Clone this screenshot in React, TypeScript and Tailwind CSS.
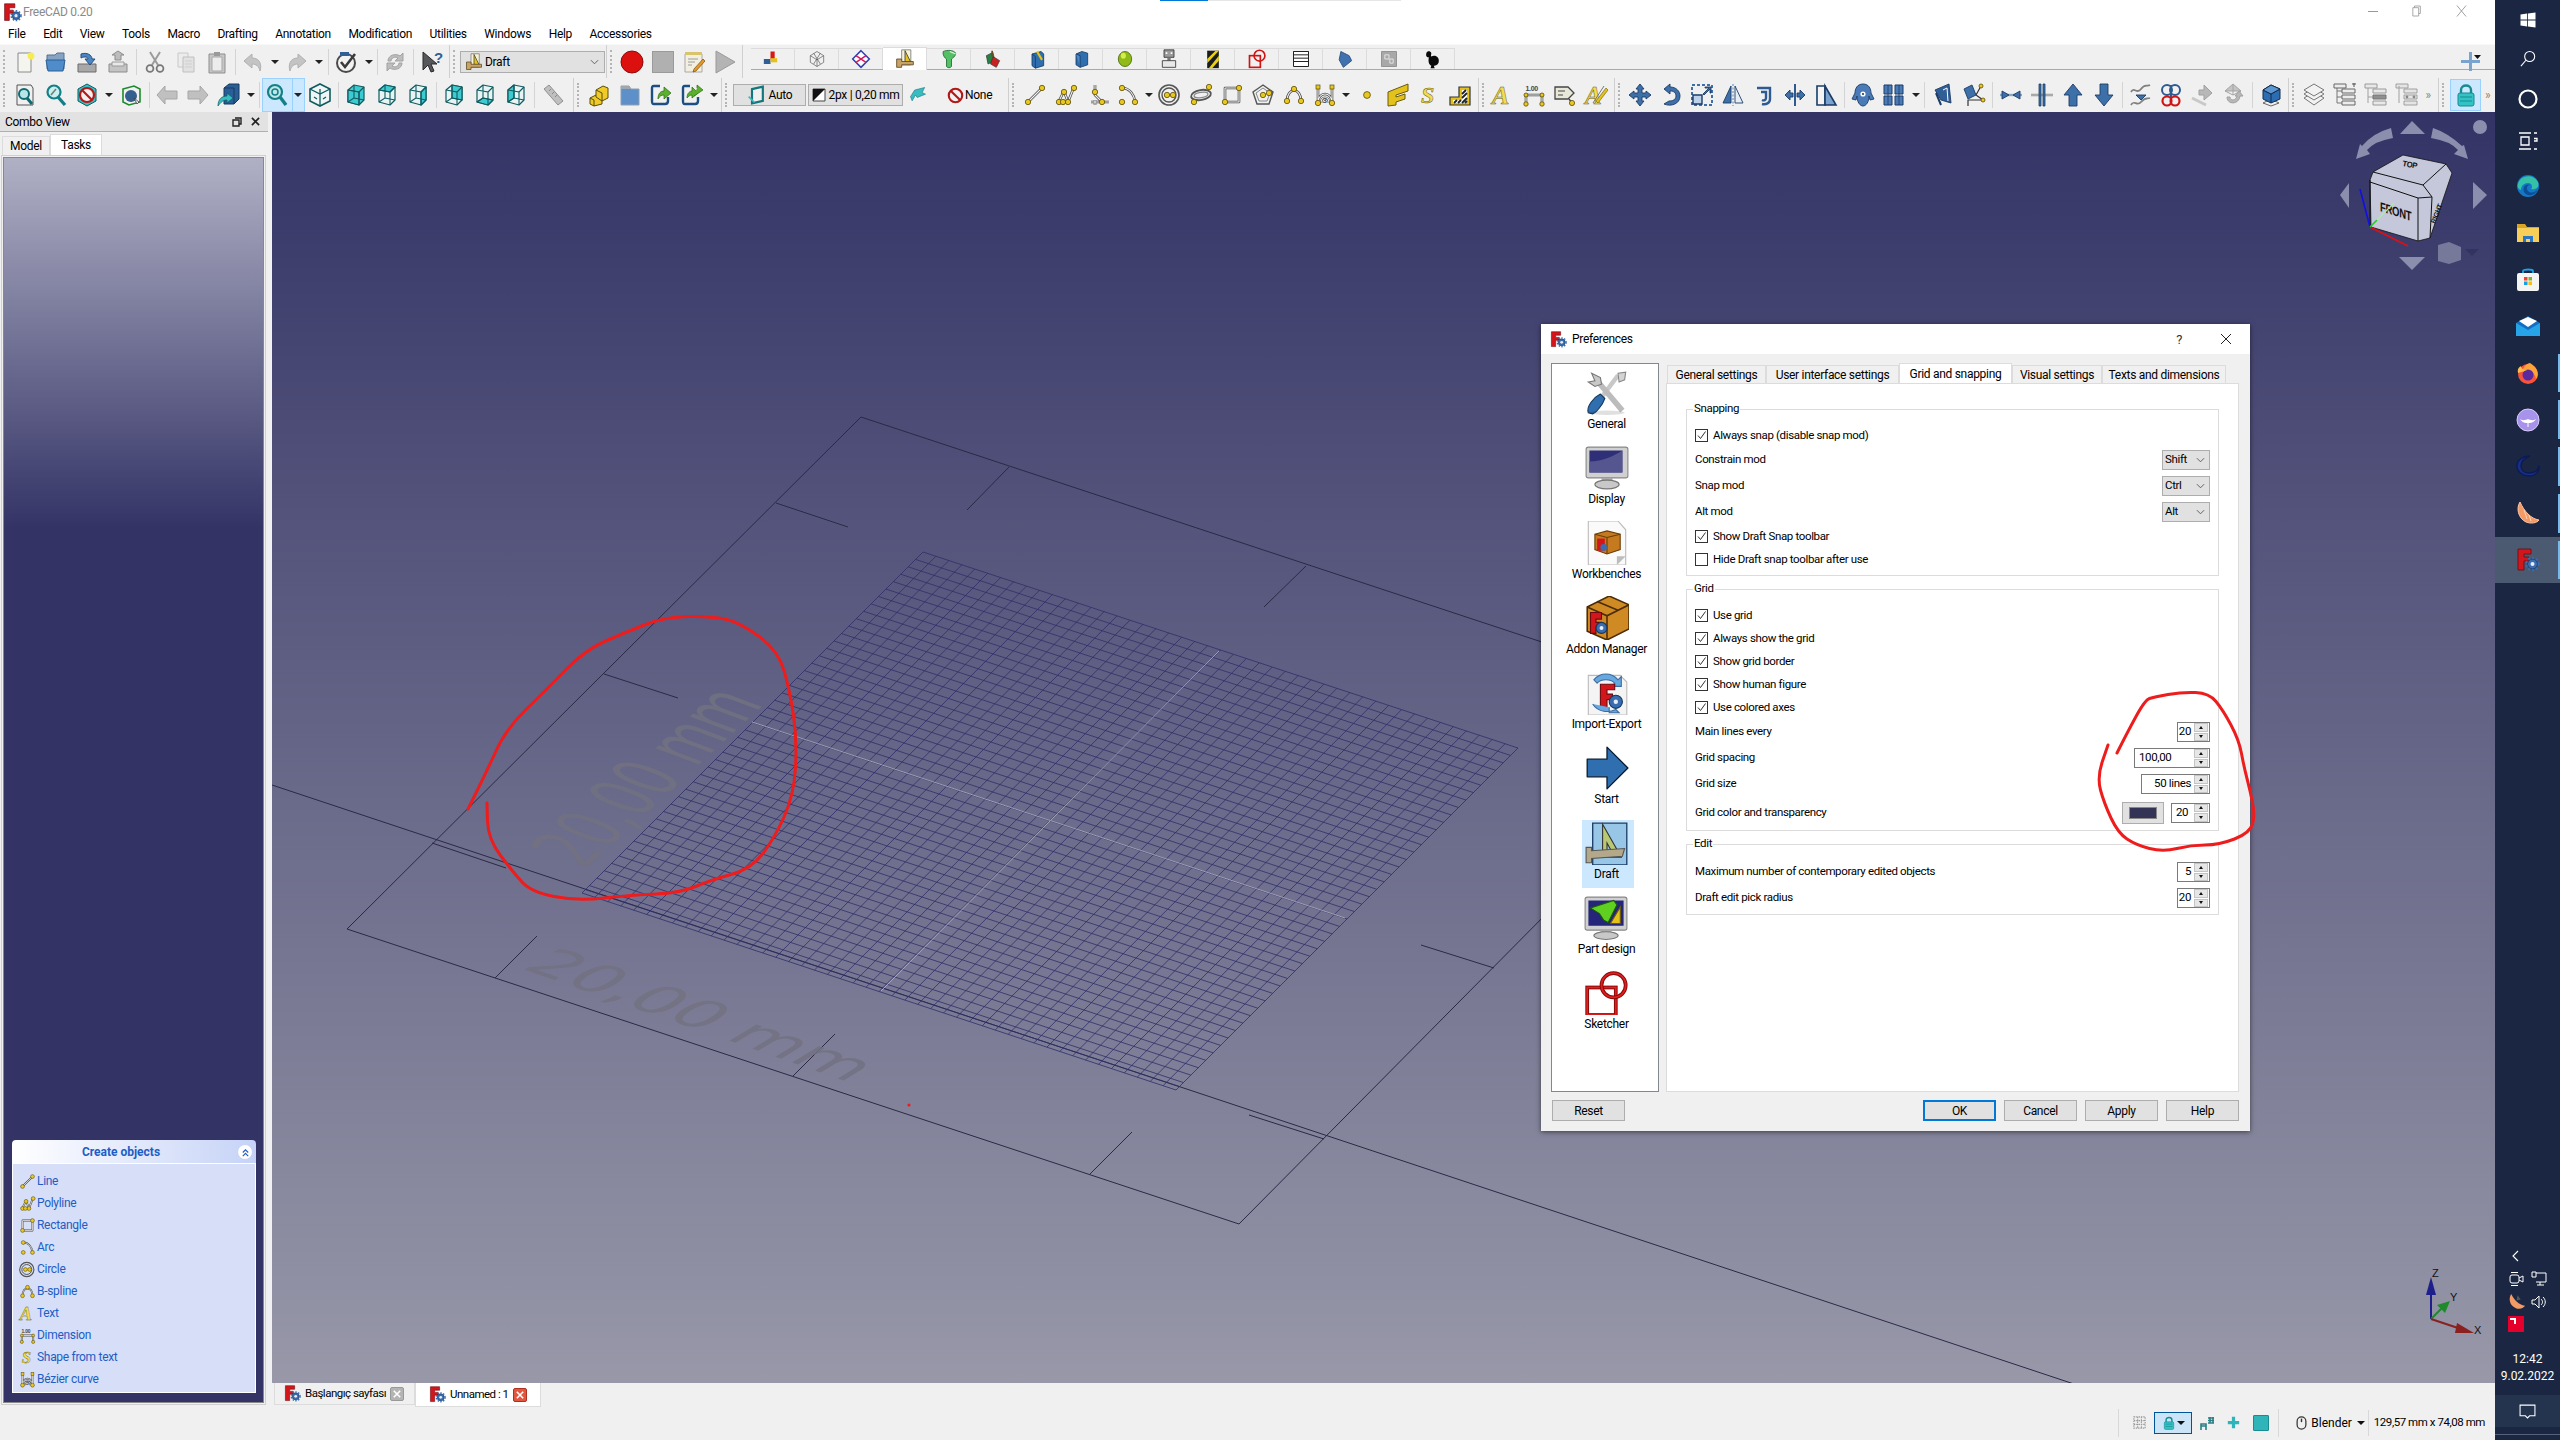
import React from "react"

// ---- small drawing helpers ----
const Svg = ({ children, className = "w-6 h-6" }: { children: React.ReactNode; className?: string }) => (
  <svg viewBox="0 0 24 24" className={`overflow-visible ${className}`}>
    {children}
  </svg>
)

const Dot = ({ x, y, r = 2.7 }: { x: number; y: number; r?: number }) => (
  <circle cx={x} cy={y} r={r} fill="#e8c820" stroke="#5c4d05" strokeWidth="0.8" />
)

const DL = ({ d }: { d: string }) => (
  <>
    <path d={d} fill="none" stroke="#4a4a4a" strokeWidth="2.6" strokeLinejoin="round" />
    <path d={d} fill="none" stroke="#f4f4f4" strokeWidth="1.1" strokeLinejoin="round" />
  </>
)

const Draft = ({ d, dots }: { d: string; dots: number[][] }) => (
  <>
    <DL d={d} />
    {dots.map((p, i) => (
      <Dot key={i} x={p[0]} y={p[1]} />
    ))}
  </>
)

const Blue = ({ d, fill = "#3d6fa8" }: { d: string; fill?: string }) => (
  <path d={d} fill={fill} stroke="#1b3c66" strokeWidth="0.9" strokeLinejoin="round" />
)

const Logo = () => (
  <>
    <path d="M2 1H15V6H8V9H13V13H8V22H2Z" fill="#d2161c" stroke="#6b0b10" strokeWidth="0.8" />
    <circle cx="16.5" cy="16" r="5" fill="#3a6cb0" stroke="#16365f" strokeWidth="0.8" />
    <circle cx="16.5" cy="16" r="6.2" fill="none" stroke="#3a6cb0" strokeWidth="2" strokeDasharray="2 2" />
    <circle cx="16.5" cy="16" r="2" fill="#e8eef7" />
  </>
)

// teal box used by the standard views, `f` is the highlighted face
const TealBox = ({ f }: { f: string }) => {
  const face: Record<string, string> = {
    front: "M4 7L15 9V22L4 19Z",
    top: "M4 7L10 2L20 4L15 9Z",
    right: "M15 9L20 4V17L15 22Z",
    rear: "M10 2L20 4V17L10 15Z",
    left: "M4 7L10 2V15L4 19Z",
    bottom: "M4 19L10 15L20 17L15 22Z",
  }
  return (
    <>
      <path d="M4 7L10 2L20 4V17L15 22L4 19Z" fill={f === "front" ? "#3ccbd0" : "#e8f4f4"} stroke="#0f5b60" strokeWidth="1.2" strokeLinejoin="round" />
      <path d={face[f]} fill="#3ccbd0" stroke="#0f5b60" strokeWidth="1.2" strokeLinejoin="round" />
      <path d="M4 7L15 9V22M15 9L20 4M10 2V15L4 19M10 15L20 17" fill="none" stroke="#0f5b60" strokeWidth="1.1" />
    </>
  )
}

const icons: Record<string, React.ReactNode> = {
  new: (
    <>
      <path d="M5 3H18V22H5Z" fill="#f5f5f0" stroke="#8a8a8a" />
      <circle cx="18" cy="6" r="3.4" fill="#f6ec50" />
    </>
  ),
  open: (
    <>
      <path d="M3 5H11L13 3H20V19H3Z" fill="#87a3c4" stroke="#55718f" />
      <path d="M2 10H21L19 21H4Z" fill="#4f8ccb" stroke="#2d5f95" />
    </>
  ),
  save: (
    <>
      <path d="M3 14H21V22H3Z" fill="#a8a8a8" stroke="#6c6c6c" />
      <path d="M6 4C12 2 17 5 17 9H20L15 15L10 9H13C13 7 10 6 6 8Z" fill="#4d85c2" stroke="#264f80" />
    </>
  ),
  saveas: (
    <>
      <path d="M3 14H21V22H3Z" fill="#c4c4c4" stroke="#8c8c8c" />
      <path d="M9 10H15V5H18L12 1L6 5H9Z" fill="#bdbdbd" stroke="#8c8c8c" />
      <path d="M6 12H18V16H6Z" fill="#e8e8e8" stroke="#9a9a9a" />
    </>
  ),
  cut: (
    <>
      <path d="M7 2L15 15M17 2L9 15" stroke="#9c9c9c" strokeWidth="2" />
      <circle cx="7" cy="18.5" r="3.4" fill="none" stroke="#787878" strokeWidth="1.8" />
      <circle cx="17" cy="18.5" r="3.4" fill="none" stroke="#787878" strokeWidth="1.8" />
    </>
  ),
  copy: (
    <>
      <path d="M4 3H14V17H4Z" fill="#ececec" stroke="#c8c8c8" />
      <path d="M9 7H20V22H9Z" fill="#e2e2e2" stroke="#c0c0c0" />
      <path d="M11 11H18M11 14H18M11 17H18" stroke="#cfcfcf" />
    </>
  ),
  paste: (
    <>
      <path d="M4 4H20V23H4Z" fill="#c6c6c6" stroke="#8f8f8f" />
      <path d="M7 7H17V21H7Z" fill="#ececec" stroke="#a8a8a8" />
      <path d="M9 2H15V6H9Z" fill="#9a9a9a" />
    </>
  ),
  undo: <path d="M11 4L3 11L11 18V14C15 14 18 16 19 21C21 15 19 8 11 8Z" fill="#c4c4c4" stroke="#b0b0b0" />,
  redo: <path d="M13 4L21 11L13 18V14C9 14 6 16 5 21C3 15 5 8 13 8Z" fill="#c4c4c4" stroke="#b0b0b0" />,
  check: (
    <>
      <circle cx="11" cy="13" r="9" fill="#f2f2f2" stroke="#4a4a4a" strokeWidth="2" />
      <path d="M5 2H14V6H5Z" fill="#2f5f96" />
      <path d="M6 12L10 17L20 4" fill="none" stroke="#3a3a3a" strokeWidth="2.6" />
    </>
  ),
  refresh: (
    <>
      <path d="M5 11C5 5 13 3 17 6L20 3V11H12L15 8C12 6 8 8 8 11Z" fill="#bdbdbd" stroke="#a2a2a2" />
      <path d="M19 13C19 19 11 21 7 18L4 21V13H12L9 16C12 18 16 16 16 13Z" fill="#bdbdbd" stroke="#a2a2a2" />
    </>
  ),
  whats: (
    <>
      <path d="M3 2L3 20L8 15L11 22L14 21L11 14H17Z" fill="#56575a" stroke="#2a2a2a" />
      <text x="14" y="13" fontFamily="Liberation Sans" fontWeight="700" fontSize="15" fill="#2f5f96">?</text>
    </>
  ),
  record: <circle cx="12" cy="12" r="11" fill="#dd1010" stroke="#8c0a0a" />,
  stop: <rect x="1.5" y="1.5" width="21" height="21" fill="#b0b0b0" stroke="#9a9a9a" />,
  edit: (
    <>
      <path d="M3 4H20V22H3Z" fill="#f3efe0" stroke="#a8a8a8" />
      <path d="M3 2H20V5H3Z" fill="#d8c46a" />
      <path d="M6 9H16M6 12H13M6 15H10" stroke="#9a9a9a" />
      <path d="M12 19L21 9L23 11L14 21L11 22Z" fill="#e39a2a" stroke="#7a4d10" strokeWidth="0.7" />
    </>
  ),
  play: <path d="M3 1L22 12L3 23Z" fill="#b4b4b4" stroke="#9a9a9a" />,
  fitall: (
    <>
      <path d="M4 2H18L20 5V22H4Z" fill="#f0f0f0" stroke="#555" />
      <circle cx="11" cy="11" r="5" fill="#b8e6e8" stroke="#0f6b70" strokeWidth="2" />
      <path d="M14 15L19 21" stroke="#0f6b70" strokeWidth="3" />
    </>
  ),
  fitsel: (
    <>
      <circle cx="10" cy="9" r="6.5" fill="#c8f0f0" stroke="#138087" strokeWidth="2.2" />
      <path d="M14 14L21 22" stroke="#138087" strokeWidth="3.4" />
      <path d="M7 12L12 6" stroke="#7a7a7a" strokeWidth="1.6" />
    </>
  ),
  nothing: (
    <>
      <path d="M12 1L21 6V18L12 23L3 18V6Z" fill="#35c0c6" stroke="#0f5b60" />
      <circle cx="12" cy="12" r="7" fill="#f0f0f0" stroke="#b81818" strokeWidth="2.2" />
      <path d="M7 7L17 17" stroke="#b81818" strokeWidth="2.2" />
    </>
  ),
  bbox: (
    <>
      <path d="M4 6L15 3L21 6V19L10 22L4 19Z" fill="none" stroke="#1e8a2a" strokeWidth="1.6" />
      <circle cx="12" cy="13" r="6" fill="#33608f" />
      <path d="M15 15L18 21L20 19Z" fill="#eee" stroke="#333" strokeWidth="0.7" />
    </>
  ),
  back: <path d="M10 3L2 12L10 21V16H22V8H10Z" fill="#c0c0c0" stroke="#a6a6a6" />,
  forward: <path d="M14 3L22 12L14 21V16H2V8H14Z" fill="#c0c0c0" stroke="#a6a6a6" />,
  sync: (
    <>
      <path d="M7 5L12 1H22V16L17 21H7Z" fill="#2a5e96" stroke="#173a60" />
      <path d="M7 5H17V21" fill="none" stroke="#173a60" />
      <path d="M1 23C1 16 5 13 10 13V10L16 15L10 20V17C6 17 4 19 1 23Z" fill="#37bcc2" stroke="#0f5b60" strokeWidth="0.7" />
    </>
  ),
  zoomsel: (
    <>
      <circle cx="10" cy="9" r="7" fill="#bfe6e8" stroke="#138087" strokeWidth="2.2" />
      <path d="M15 14L21 22" stroke="#138087" strokeWidth="3.4" />
      <circle cx="10" cy="9" r="3" fill="none" stroke="#138087" strokeWidth="1.5" />
    </>
  ),
  iso: (
    <>
      <path d="M12 1L22 6V18L12 23L2 18V6Z" fill="#eef6f6" stroke="#0f5b60" strokeWidth="1.6" />
      <path d="M2 6L12 11L22 6M12 11V23M12 6V11M6 14L9 16M15 16L18 14" fill="none" stroke="#0f5b60" strokeWidth="1.3" />
    </>
  ),
  vfront: <TealBox f="front" />,
  vtop: <TealBox f="top" />,
  vright: <TealBox f="right" />,
  vrear: <TealBox f="rear" />,
  vbottom: <TealBox f="bottom" />,
  vleft: <TealBox f="left" />,
  measure: (
    <>
      <path d="M3 6L8 2L22 18L17 22Z" fill="#bfbfbf" stroke="#909090" />
      <path d="M8 8L10 6M11 11L13 9M14 14L16 12" stroke="#8a8a8a" />
    </>
  ),
  part: (
    <>
      <path d="M3 15L11 11L15 13V21L7 23L3 21Z" fill="#eecb2a" stroke="#5c4d05" />
      <path d="M9 7L16 3L21 5V15L15 18L9 14Z" fill="#eecb2a" stroke="#5c4d05" />
      <path d="M3 15L7 17V23M9 7L15 10V18" fill="none" stroke="#5c4d05" />
    </>
  ),
  group: (
    <>
      <path d="M3 3H11L13 6H21V22H3Z" fill="#5d8fc8" stroke="#8ca0b6" />
      <path d="M3 3H11L13 6H3Z" fill="#9fa7b0" />
    </>
  ),
  link: (
    <>
      <path d="M11 3H5C3 3 3 4 3 6V18C3 20 3 21 5 21H16C18 21 19 20 19 18V14" fill="none" stroke="#1c4e82" strokeWidth="2.4" />
      <path d="M9 16C9 10 12 8 15 8V4L22 10L15 16V12C12 12 11 13 9 16Z" fill="#5cb030" stroke="#2a6b10" strokeWidth="0.7" />
    </>
  ),
  link2: (
    <>
      <path d="M10 3H5C3 3 3 4 3 6V18C3 20 3 21 5 21H15C17 21 18 20 18 18V14" fill="none" stroke="#1c4e82" strokeWidth="2.4" />
      <path d="M7 15C7 10 10 8 12 8V4L18 10L12 15V12C10 12 9 13 7 15Z" fill="#5cb030" stroke="#2a6b10" strokeWidth="0.7" />
      <path d="M14 13L23 7L17 2V5" fill="#5cb030" stroke="#2a6b10" strokeWidth="0.7" />
    </>
  ),
  // draft drawing tools
  line: <Draft d="M5 19L19 5" dots={[[5, 19], [19, 5]]} />,
  polyline: <Draft d="M4 20L10 8L14 19L20 4" dots={[[5, 19], [10, 9], [14, 19], [9, 19], [20, 5]]} />,
  fillet: (
    <>
      <DL d="M10 2V12L17 19H24M10 22V17M6 19H14" />
      <Dot x={10} y={9} />
      <Dot x={17} y={19} />
    </>
  ),
  arc: <Draft d="M6 5C14 5 18 12 19 18" dots={[[6, 5], [6, 19], [19, 19]]} />,
  circle: (
    <>
      <circle cx="11" cy="12" r="10" fill="none" stroke="#555" strokeWidth="1.6" />
      <circle cx="11" cy="12" r="7" fill="none" stroke="#555" strokeWidth="1.4" />
      <Dot x={9} y={12} />
      <Dot x={15} y={12} />
    </>
  ),
  ellipse: (
    <>
      <ellipse cx="12" cy="12" rx="10" ry="5" transform="rotate(-10 12 12)" fill="none" stroke="#555" strokeWidth="1.8" />
      <ellipse cx="12" cy="12" rx="7" ry="2.6" transform="rotate(-10 12 12)" fill="none" stroke="#888" strokeWidth="1.2" />
      <Dot x={5} y={19} />
      <Dot x={20} y={4} />
    </>
  ),
  rect: <Draft d="M5 5H19V19H5Z" dots={[[19, 5], [5, 19]]} />,
  polygon: (
    <>
      <path d="M12 2L22 9L18 21H6L2 9Z" fill="none" stroke="#555" strokeWidth="1.4" />
      <path d="M12 5L19 10L16 18H8L5 10Z" fill="none" stroke="#888" />
      <Dot x={12} y={12} />
      <Dot x={18} y={10} />
    </>
  ),
  bspline: <Draft d="M5 18C5 4 19 4 19 18" dots={[[5, 18], [12, 6], [19, 18]]} />,
  bezier: (
    <>
      <DL d="M5 20V4M19 20V4M5 20C5 8 19 8 19 20M8 20C8 13 16 13 16 20" />
      <rect x="3" y="2" width="4" height="4" fill="#e8c820" stroke="#5c4d05" strokeWidth="0.7" />
      <rect x="17" y="2" width="4" height="4" fill="#e8c820" stroke="#5c4d05" strokeWidth="0.7" />
      <Dot x={5} y={20} />
      <Dot x={19} y={20} />
      <text x="9.5" y="20" fontFamily="Liberation Sans" fontWeight="700" fontSize="8" fill="#555">3</text>
    </>
  ),
  point: <Dot x={12} y={12} r={3.4} />,
  facebinder: <path d="M2 9L22 1V8L10 12V14L19 11V16L10 19V22L2 23Z" fill="#e3c21c" stroke="#6b5a08" strokeLinejoin="round" />,
  shapestring: (
    <text x="4" y="20" fontFamily="Liberation Serif" fontStyle="italic" fontWeight="700" fontSize="24" fill="#f2dc50" stroke="#6b5a08" strokeWidth="0.5">S</text>
  ),
  hatch: (
    <>
      <path d="M2 14H11V4H22V22H2Z" fill="#e3c21c" stroke="#333" strokeWidth="1.2" />
      <path d="M5 17H19V20H5Z" fill="#fff" />
      <path d="M14 7H19V20H14Z" fill="#fff" />
      <path d="M14 11L18 7M14 15L19 10M6 20L9 17M10 20L13 17M14 20L19 15M17 20L19 18" stroke="#222" strokeWidth="1.8" />
    </>
  ),
  // annotation
  atext: (
    <text x="1" y="21" fontFamily="Liberation Serif" fontStyle="italic" fontWeight="700" fontSize="26" fill="#f2dc50" stroke="#6b5a08" strokeWidth="0.5">A</text>
  ),
  dimension: (
    <>
      <text x="3.5" y="8" fontFamily="Liberation Sans" fontWeight="700" fontSize="7" fill="#444">1.00</text>
      <DL d="M4 12H20M4 12V21M20 12V21" />
      <Dot x={4} y={12} r={2} />
      <Dot x={20} y={12} r={2} />
      <Dot x={4} y={21} r={2.2} />
      <Dot x={20} y={21} r={2.2} />
    </>
  ),
  label: (
    <>
      <path d="M2 4H15L21 10L15 16H2Z" fill="#e8e8d8" stroke="#444" strokeWidth="1.3" />
      <path d="M5 8H12M5 12H10" stroke="#444" />
      <path d="M16 16L19 20" stroke="#444" strokeWidth="1.4" />
      <Dot x={19} y={20} r={2.6} />
    </>
  ),
  annostyle: (
    <>
      <text x="1" y="21" fontFamily="Liberation Serif" fontStyle="italic" fontWeight="700" fontSize="25" fill="#f2dc50" stroke="#6b5a08" strokeWidth="0.5">A</text>
      <path d="M12 18L22 5L24 7L14 20Z" fill="#e3c21c" stroke="#6b5a08" strokeWidth="0.6" />
      <path d="M9 20L20 3" stroke="#777" strokeWidth="1" />
    </>
  ),
  // draft modification tools
  move: <Blue d="M12 1L16 6H14V10H18V8L23 12L18 16V14H14V18H16L12 23L8 18H10V14H6V16L1 12L6 8V10H10V6H8Z" />,
  rotate: <Blue d="M11 1L5 6L11 11V8C15 8 17 10 17 13C17 17 13 18 10 18L5 21C12 24 21 21 21 13C21 8 17 4 11 4Z" />,
  scale: (
    <>
      <path d="M2 2H22V22H2Z" fill="none" stroke="#3d6fa8" strokeWidth="2" strokeDasharray="3 2" />
      <path d="M3 12H12V21H3Z" fill="#bcd2ea" stroke="#1b3c66" strokeWidth="1.4" />
      <Blue d="M13 11L19 5H15V4H21V10H20V6L14 12Z" />
    </>
  ),
  mirror: (
    <>
      <Blue d="M10 3V20H2Z" />
      <path d="M14 3V20H22Z" fill="#e8eef6" stroke="#1b3c66" strokeWidth="0.9" />
      <path d="M12 1V23" stroke="#7aa3cf" strokeWidth="1.4" strokeDasharray="2 1.5" />
    </>
  ),
  offset: <path d="M5 5H18V16C18 20 14 22 10 21M9 9H14V15C14 17 12 18 10 17" fill="none" stroke="#2d5b91" strokeWidth="2.4" />,
  trim: (
    <>
      <Blue d="M7 7L2 12L7 17V14H10V10H7Z" />
      <Blue d="M17 7L22 12L17 17V14H14V10H17Z" />
      <path d="M12 1V23" stroke="#2d5b91" strokeWidth="2" />
    </>
  ),
  stretch: (
    <>
      <path d="M3 3H11V22H3Z" fill="#f4f4f4" stroke="#1b3c66" strokeWidth="1.6" />
      <path d="M11 3L22 22H11Z" fill="#7ba3d0" stroke="#1b3c66" strokeWidth="1.6" />
    </>
  ),
  clone: (
    <>
      <path d="M12 1C18 1 20 6 20 10L23 16L19 17L18 13C18 19 15 23 12 23C9 23 6 19 6 13L5 17L1 16L4 10C4 6 6 1 12 1Z" fill="#4a7bb8" stroke="#1b3c66" strokeWidth="0.9" />
      <circle cx="12" cy="11" r="2.6" fill="#fff" />
      <circle cx="12" cy="11" r="1.1" fill="#1b3c66" />
    </>
  ),
  array: (
    <>
      <path d="M2 2H10V11H2ZM13 2H21V11H13ZM2 13H10V22H2ZM13 13H21V22H13Z" fill="#4a7bb8" stroke="#1b3c66" />
      <path d="M6 2V22M17 2V22" stroke="#1b3c66" strokeWidth="0.8" />
    </>
  ),
  draft2d: (
    <>
      <Blue d="M4 7L18 1L20 20L10 17Z" fill="#2f5f96" />
      <path d="M12 7L16 5L17 18" fill="none" stroke="#fff" />
      <path d="M5 10L10 22" stroke="#1b3c66" strokeWidth="2" />
    </>
  ),
  nodes: (
    <>
      <Blue d="M2 6L10 2L14 12L6 16Z" />
      <path d="M14 12L19 3M14 12L21 17H6V23" fill="none" stroke="#333" strokeWidth="1.2" />
      <Dot x={19} y={3} r={2} />
      <Dot x={21} y={17} r={2} />
    </>
  ),
  joinpt: (
    <>
      <path d="M1 12H23" stroke="#8ba6c4" strokeWidth="2.4" />
      <Blue d="M3 8L10 12L3 16ZM21 8L14 12L21 16Z" />
    </>
  ),
  split: (
    <>
      <path d="M1 12H23" stroke="#a9a9a9" strokeWidth="2.6" />
      <path d="M9 1H11V23H9ZM13 1H15V23H13Z" fill="#3d6fa8" stroke="#1b3c66" strokeWidth="0.8" />
    </>
  ),
  up: <Blue d="M12 1L21 12H16V23H8V12H3Z" />,
  down: <Blue d="M12 23L21 12H16V1H8V12H3Z" />,
  wire: (
    <>
      <path d="M3 9C6 3 9 12 13 6S19 4 22 2M3 22C6 16 9 24 13 19S19 16 22 15" fill="none" stroke="#808080" strokeWidth="1.8" />
      <Blue d="M8 12H18L13 17Z" />
    </>
  ),
  draft2sketch: (
    <>
      <circle cx="8" cy="7" r="5" fill="none" stroke="#2d5b91" strokeWidth="2" />
      <circle cx="16" cy="7" r="5" fill="none" stroke="#2d5b91" strokeWidth="2" />
      <path d="M12 2V16" stroke="#2d5b91" strokeWidth="2" />
      <circle cx="8" cy="18" r="4.5" fill="none" stroke="#d01414" strokeWidth="2.2" />
      <circle cx="16" cy="18" r="4.5" fill="none" stroke="#d01414" strokeWidth="2.2" />
    </>
  ),
  shape2d: (
    <>
      <path d="M9 7H14V2L22 10L14 17V12H9Z" fill="#b8b8b8" stroke="#a0a0a0" />
      <path d="M2 15L16 22" stroke="#c8c8c8" strokeWidth="3" />
    </>
  ),
  shape3d: (
    <>
      <path d="M12 1L20 8H4Z" fill="#c4c4c4" stroke="#a4a4a4" />
      <path d="M12 1V12M4 8L12 12L20 8" fill="none" stroke="#a4a4a4" />
      <path d="M6 14C6 22 18 22 19 13H22L18 8L14 13H16C15 18 9 18 9 14Z" fill="#b8b8b8" stroke="#a0a0a0" />
    </>
  ),
  layercube: (
    <>
      <path d="M4 20L12 16L20 20L12 23Z" fill="none" stroke="#666" />
      <path d="M4 7L12 2L21 6V16L12 20L4 16Z" fill="#2c6cb0" stroke="#102c4e" />
      <path d="M4 7L12 11L21 6M12 11V20" fill="none" stroke="#102c4e" />
      <path d="M12 2L21 6L12 11L4 7Z" fill="#5c95d0" stroke="#102c4e" />
    </>
  ),
  layers: (
    <>
      <path d="M2 15L12 9L22 15L12 22Z" fill="#f2f2f2" stroke="#777" />
      <path d="M2 11L12 5L22 11L12 17Z" fill="#f2f2f2" stroke="#777" />
      <path d="M2 7L12 1L22 7L12 13Z" fill="#f2f2f2" stroke="#777" />
    </>
  ),
  tree1: (
    <>
      <path d="M4 3V20M4 8H9M4 14H9M4 20H9" stroke="#777" fill="none" />
      <path d="M1 1H13V5H1ZM9 6H22V10H9ZM9 12H22V16H9ZM9 18H22V22H9Z" fill="#ececec" stroke="#666" />
      <path d="M19 1H23M21 0V4" stroke="#555" />
    </>
  ),
  tree2: (
    <>
      <path d="M4 3V20M4 14H9" stroke="#a0a0a0" fill="none" />
      <path d="M1 1H13V5H1ZM9 6H22V10H9ZM9 18H22V22H9Z" fill="#e8e8e8" stroke="#9a9a9a" />
      <path d="M9 12H22V16H9Z" fill="#8f8f8f" stroke="#777" />
    </>
  ),
  tree3: (
    <>
      <path d="M1 1H13V5H1ZM9 6H22V10H9ZM9 12H22V16H9ZM9 18H22V22H9Z" fill="#e4e4e4" stroke="#a0a0a0" />
      <path d="M4 3V20" stroke="#a0a0a0" />
      <circle cx="12" cy="14" r="1.4" fill="#888" />
      <circle cx="19" cy="14" r="1.4" fill="#888" />
    </>
  ),
  lock: (
    <>
      <path d="M7 11V7C7 1 17 1 17 7V11" fill="none" stroke="#148c90" strokeWidth="2.4" />
      <rect x="4" y="10" width="16" height="13" rx="2" fill="#33c2c6" stroke="#148c90" />
      <path d="M6 14H18M6 18H18" stroke="#148c90" />
    </>
  ),
  // workbench tabs
  wbA2: (
    <>
      <path d="M9 3H14V12H9Z" fill="#d61818" />
      <path d="M1 12H9V18H1Z" fill="#2f5f96" />
      <path d="M9 11H17V16H9Z" fill="#e3c21c" />
    </>
  ),
  wbMesh: <path d="M12 3L20 8V16L12 21L4 16V8ZM4 8L12 13L20 8M12 13V21M8 5L16 18M16 5L8 18" fill="#f0f0f0" stroke="#555" strokeWidth="0.8" />,
  wbFem: (
    <>
      <path d="M12 2L22 12L12 22L2 12Z" fill="#fff" stroke="#2f3fb0" strokeWidth="1.8" />
      <path d="M6 8L18 16M18 8L6 16" stroke="#d61860" strokeWidth="1.8" />
    </>
  ),
  wbDraft: (
    <>
      <path d="M8 1H19V19H8Z" fill="#f6f2d8" stroke="#777" />
      <path d="M12 2L19 16H12Z" fill="#e3c21c" stroke="#3a3a3a" />
      <path d="M2 12H8V15H22V19H8V22H2Z" fill="#c7a465" stroke="#5c4520" />
    </>
  ),
  wbPart: (
    <>
      <path d="M5 3C9 1 18 1 20 5C20 9 16 11 15 12V21C13 23 11 23 9 21V12C7 11 4 7 5 3Z" fill="#54c066" stroke="#206a30" />
      <path d="M13 3L20 6" stroke="#e0f6e0" strokeWidth="1.5" />
    </>
  ),
  wbPath: (
    <>
      <path d="M4 8L12 4L14 14L6 18Z" fill="#268044" stroke="#333" strokeWidth="0.8" />
      <path d="M12 9L20 14L16 22L9 18Z" fill="#c92020" stroke="#333" strokeWidth="0.8" />
      <path d="M11 2V9" stroke="#6a4a20" strokeWidth="2" />
    </>
  ),
  wbPd: (
    <>
      <path d="M6 6L17 3L20 6V20L10 23L6 20Z" fill="#2f6fb0" stroke="#173a60" />
      <path d="M12 3L18 13" stroke="#e3c21c" strokeWidth="2.6" />
      <path d="M6 6L10 9V23" fill="none" stroke="#173a60" />
    </>
  ),
  wbBlue: (
    <>
      <path d="M6 6L13 3L20 5V19L11 22L6 19Z" fill="#2f6fb0" stroke="#173a60" />
      <path d="M6 6L11 8V22" fill="#4f88c4" stroke="#173a60" />
    </>
  ),
  wbBall: (
    <>
      <ellipse cx="12" cy="12" rx="8" ry="9" fill="#8ebb18" stroke="#4a6a08" />
      <ellipse cx="10" cy="8" rx="3" ry="3.6" fill="#d6ee4c" />
    </>
  ),
  wbRobot: (
    <>
      <path d="M6 1H18V10H6Z" fill="#9a9a9a" stroke="#333" />
      <path d="M8 4H10V6H8ZM14 4H16V6H14Z" fill="#fff" />
      <path d="M10 10H14V14H10Z" fill="#777" />
      <path d="M4 14H20V22H4Z" fill="#e8e8e8" stroke="#333" />
    </>
  ),
  wbTech: (
    <>
      <path d="M5 2H19V23H5Z" fill="#1c1c1c" />
      <path d="M5 12L15 2H19L5 17ZM19 8V14L11 23H7Z" fill="#e8d018" />
    </>
  ),
  wbSketch: (
    <>
      <rect x="3" y="8" width="13" height="14" fill="none" stroke="#d01414" strokeWidth="2" />
      <circle cx="15" cy="8" r="6.5" fill="none" stroke="#d01414" strokeWidth="2" />
    </>
  ),
  wbSheet: <path d="M3 3H21V21H3ZM3 7H21M3 11H21M3 15H21M3 3H21" fill="#fff" stroke="#222" strokeWidth="1.2" />,
  wbSurface: <path d="M7 3L17 8L20 14L10 22L5 13Z" fill="#3f72ae" stroke="#244a78" />,
  wbTd: (
    <>
      <path d="M3 3H21V21H3Z" fill="#a8a8a8" stroke="#888" />
      <path d="M7 7H12V12H7ZM13 12H17V17H13Z" fill="none" stroke="#eee" />
    </>
  ),
  wbDodo: (
    <>
      <path d="M4 5C5 2 9 2 10 5C10 7 9 8 10 9C14 7 19 9 19 14C19 19 15 20 13 20L14 23H9L10 20C7 19 6 15 7 10C5 10 3 9 4 5Z" fill="#0a0a0a" />
    </>
  ),
}

const Icon = ({ k, className }: { k: string; className?: string }) => <Svg className={className}>{icons[k]}</Svg>

// ---- toolbars ----
const Tool = ({ k, arrow = "" }: { k: string; arrow?: string }) => (
  <>
    <div className="w-[31px] h-full flex shrink-0 items-center justify-center">
      <Icon k={k} />
    </div>
    {arrow && <Arrow className={arrow} />}
  </>
)

const Arrow = ({ className }: { className: string }) => (
  <div className={`h-full flex shrink-0 items-center justify-center ${className}`}>
    <div className="w-0 h-0 border-x-[4px] border-x-transparent border-t-[4px] border-t-[#222]" />
  </div>
)

const Sep = ({ className }: { className: string }) => (
  <div className={`h-full flex shrink-0 items-center justify-center ${className}`}>
    <div className="w-px h-[26px] bg-[#d4d4d4]" />
  </div>
)

const Toolbar = ({ className, grip, children }: { className: string; grip: string; children: React.ReactNode }) => (
  <div className={`h-full flex shrink-0 items-center border-r border-[#cfcfcf] ${className}`}>
    <div className={`h-full shrink-0 pl-[3px] py-[5px] ${grip}`}>
      <div className="h-full w-0 border-l-[2px] border-dotted border-[#b4b4b4]" />
    </div>
    {children}
  </div>
)

const tabIcons = ["wbA2", "wbMesh", "wbFem", "wbDraft", "wbPart", "wbPath", "wbPd", "wbBlue", "wbBall", "wbRobot", "wbTech", "wbSketch", "wbSheet", "wbSurface", "wbTd", "wbDodo"]

const TopRow = () => (
  <div className="h-[34px] flex bg-[#f0f0f0] border-t border-[#f8f8f8]">
    <Toolbar className="w-[450px]" grip="w-[9.5px]">
      <Tool k="new" />
      <Tool k="open" />
      <Tool k="save" />
      <Tool k="saveas" />
      <Sep className="w-[6px]" />
      <Tool k="cut" />
      <Tool k="copy" />
      <Tool k="paste" />
      <Sep className="w-[5px]" />
      <Tool k="undo" arrow="w-[13px]" />
      <Tool k="redo" arrow="w-[13px]" />
      <Sep className="w-[6px]" />
      <Tool k="check" arrow="w-[13px]" />
      <Sep className="w-[4px]" />
      <Tool k="refresh" />
      <Sep className="w-[6px]" />
      <Tool k="whats" />
    </Toolbar>
    <Toolbar className="w-[157px]" grip="w-[10px]">
      <div className="w-[145px] h-[22px] flex items-center bg-[#e1e1e1] border border-[#adadad] pl-[4px]">
        <Icon k="wbDraft" className="w-[18px] h-[18px]" />
        <span className="ml-[2px] flex-1">Draft</span>
        <svg viewBox="0 0 10 6" className="w-[9px] h-[6px] mr-[5px]">
          <path d="M1 1L5 5L9 1" fill="none" stroke="#555" />
        </svg>
      </div>
    </Toolbar>
    <Toolbar className="w-[136px]" grip="w-[9.5px]">
      <Tool k="record" />
      <Tool k="stop" />
      <Tool k="edit" />
      <Tool k="play" />
    </Toolbar>
    <div className="flex-1 relative pl-[8px] pt-[3px]">
      <div className="h-[22px] flex border-b border-[#a9a9a9]">
        {tabIcons.map((t) => (
          <div
            key={t}
            className={`w-[44px] shrink-0 flex items-center justify-center border-r border-t border-[#dcdcdc] ${
              t === "wbDraft" ? "bg-white h-[23px] -mt-[1px]" : ""
            }`}
          >
            <Icon k={t} className="w-[20px] h-[20px]" />
          </div>
        ))}
      </div>
      <svg viewBox="0 0 24 24" className="absolute right-[12px] top-[5px] w-[24px] h-[24px]">
        <path d="M10 2H13V10H21V13H13V21H10V13H2V10H10Z" fill="#7aa3cf" />
        <path d="M15 5H22L18.5 9Z" fill="#111" />
      </svg>
    </div>
  </div>
)

const BottomRow = () => (
  <div className="h-[34px] flex bg-[#f0f0f0]">
    <Toolbar className="w-[574px]" grip="w-[9.5px]">
      <Tool k="fitall" />
      <Tool k="fitsel" />
      <Tool k="nothing" arrow="w-[13px]" />
      <Tool k="bbox" />
      <Sep className="w-[5px]" />
      <Tool k="back" />
      <Tool k="forward" />
      <Tool k="sync" arrow="w-[13px]" />
      <Sep className="w-[4px]" />
      <div className="w-[43px] h-full shrink-0 flex items-center bg-[#cce8ff] border border-[#99d1ff]">
        <div className="w-[30px] flex justify-center">
          <Icon k="zoomsel" />
        </div>
        <div className="w-[12px] h-full flex items-center justify-center border-l border-[#99d1ff]">
          <div className="w-0 h-0 border-x-[4px] border-x-transparent border-t-[4px] border-t-[#222]" />
        </div>
      </div>
      <Tool k="iso" />
      <Sep className="w-[5px]" />
      <Tool k="vfront" />
      <Tool k="vtop" />
      <Tool k="vright" />
      <Sep className="w-[5px]" />
      <Tool k="vrear" />
      <Tool k="vbottom" />
      <Tool k="vleft" />
      <Sep className="w-[6px]" />
      <Tool k="measure" />
    </Toolbar>
    <Toolbar className="w-[148px]" grip="w-[9.5px]">
      <Tool k="part" />
      <Tool k="group" />
      <Tool k="link" />
      <Tool k="link2" arrow="w-[13px]" />
    </Toolbar>
    <Toolbar className="w-[287px]" grip="w-[11px]">
      <div className="w-[73px] h-[22px] flex items-center justify-center gap-[2px] bg-[#e1e1e1] border border-[#adadad]">
        <svg viewBox="0 0 24 24" className="w-[20px] h-[20px]">
          <path d="M6 5L19 2V19L6 22Z" fill="#f0f0f0" stroke="#12777c" strokeWidth="2.6" />
          <path d="M2 14L9 21" stroke="#37bcc2" strokeWidth="2" />
        </svg>
        <span>Auto</span>
      </div>
      <div className="w-[95px] h-[22px] ml-[2px] flex items-center justify-center gap-[3px] bg-[#e1e1e1] border border-[#adadad]">
        <svg viewBox="0 0 14 14" className="w-[14px] h-[14px]">
          <path d="M1 1H13V13H1Z" fill="#fff" stroke="#444" />
          <path d="M1 1H13L1 13Z" fill="#111" />
        </svg>
        <span>2px | 0,20 mm</span>
      </div>
      <div className="w-[30px] h-full flex items-center justify-center">
        <svg viewBox="0 0 24 24" className="w-[20px] h-[20px]">
          <path d="M3 14L8 6L20 3L17 9L21 11L11 15L9 12L5 19Z" fill="#37bcc2" stroke="#14767b" strokeWidth="0.7" />
        </svg>
      </div>
      <div className="ml-[14px] flex items-center gap-[1px]">
        <svg viewBox="0 0 24 24" className="w-[17px] h-[17px]">
          <circle cx="12" cy="12" r="9.5" fill="none" stroke="#b01818" strokeWidth="3" />
          <path d="M5.5 5.5L18.5 18.5" stroke="#b01818" strokeWidth="3" />
        </svg>
        <span>None</span>
      </div>
    </Toolbar>
    <Toolbar className="w-[470px]" grip="w-[10.5px]">
      <Tool k="line" />
      <Tool k="polyline" />
      <Tool k="fillet" />
      <Tool k="arc" arrow="w-[11px]" />
      <Tool k="circle" />
      <Tool k="ellipse" />
      <Tool k="rect" />
      <Tool k="polygon" />
      <Tool k="bspline" />
      <Tool k="bezier" arrow="w-[11px]" />
      <Tool k="point" />
      <Tool k="facebinder" />
      <Tool k="shapestring" />
      <Tool k="hatch" />
    </Toolbar>
    <Toolbar className="w-[136px]" grip="w-[8.5px]">
      <Tool k="atext" />
      <Tool k="dimension" />
      <Tool k="label" />
      <Tool k="annostyle" />
    </Toolbar>
    <Toolbar className="w-[674px]" grip="w-[9.5px]">
      <Tool k="move" />
      <Tool k="rotate" />
      <Tool k="scale" />
      <Tool k="mirror" />
      <Tool k="offset" />
      <Tool k="trim" />
      <Tool k="stretch" />
      <Sep className="w-[6px]" />
      <Tool k="clone" />
      <Tool k="array" arrow="w-[12px]" />
      <Sep className="w-[6px]" />
      <Tool k="draft2d" />
      <Tool k="nodes" />
      <Sep className="w-[6px]" />
      <Tool k="joinpt" />
      <Tool k="split" />
      <Tool k="up" />
      <Tool k="down" />
      <Sep className="w-[5px]" />
      <Tool k="wire" />
      <Tool k="draft2sketch" />
      <Tool k="shape2d" />
      <Tool k="shape3d" />
      <Sep className="w-[7px]" />
      <Tool k="layercube" />
    </Toolbar>
    <Toolbar className="w-[150px]" grip="w-[9.5px]">
      <Tool k="layers" />
      <Tool k="tree1" />
      <Tool k="tree2" />
      <Tool k="tree3" />
      <span className="ml-[3px] text-[#888]">»</span>
    </Toolbar>
    <div className="flex-1 flex items-center relative">
      <div className="h-full shrink-0 w-[11px] pl-[3px] py-[5px]">
        <div className="h-full w-0 border-l-[2px] border-dotted border-[#b4b4b4]" />
      </div>
      <div className="w-[31px] h-[32px] flex items-center justify-center bg-[#cce8ff] border border-[#99d1ff]">
        <Icon k="lock" />
      </div>
      <span className="ml-[4px] text-[#888]">»</span>
    </div>
  </div>
)

// ---- left dock ----
const taskItems = [
  ["Line", "line"],
  ["Polyline", "polyline"],
  ["Rectangle", "rect"],
  ["Arc", "arc"],
  ["Circle", "circle"],
  ["B-spline", "bspline"],
  ["Text", "atext"],
  ["Dimension", "dimension"],
  ["Shape from text", "shapestring"],
  ["Bézier curve", "bezier"],
]

const ComboView = () => (
  <div className="w-[272px] shrink-0 flex flex-col bg-[#f0f0f0]">
    <div className="w-[268px] h-[20px] flex items-center justify-between bg-[#e2e2e2] border-b border-[#b0b0b0] pl-[5px] pr-[8px]">
      <span>Combo View</span>
      <div className="flex items-center gap-[9px]">
        <svg viewBox="0 0 10 10" className="w-[10px] h-[10px]">
          <path d="M3 1H9V7H7M1 3H7V9H1Z" fill="none" stroke="#222" strokeWidth="1.4" />
        </svg>
        <svg viewBox="0 0 10 10" className="w-[9px] h-[9px]">
          <path d="M1 1L9 9M9 1L1 9" stroke="#222" strokeWidth="1.8" />
        </svg>
      </div>
    </div>
    <div className="h-[23px] flex items-end pl-[2px]">
      <div className="w-[48px] h-[19px] flex items-center justify-center bg-[#f0f0f0] border border-[#dcdcdc] border-b-0">Model</div>
      <div className="w-[52px] h-[21px] flex items-center justify-center bg-white border border-[#dcdcdc] border-b-0">Tasks</div>
    </div>
    <div className="w-[265px] flex-1 ml-px flex flex-col border border-[#d0d0d0] p-px">
      <div className="flex-1 border border-[#888] bg-[linear-gradient(180deg,#b0b0c5_0px,#333366_370px)] flex flex-col justify-end pb-[9px] pl-[8px]">
        <div className="w-[244px] h-[253px] flex flex-col">
          <div className="h-[24px] relative flex items-center justify-center pr-[26px] rounded-t-[4px] bg-[linear-gradient(90deg,#ffffff,#c6d3f7)] border-b border-white">
            <span className="font-bold text-[#215dc6] tracking-normal">Create objects</span>
            <div className="absolute right-[3px] top-[4px] w-[16px] h-[16px] rounded-full bg-white border border-[#c6d3f7] flex items-center justify-center">
              <svg viewBox="0 0 10 10" className="w-[9px] h-[9px]">
                <path d="M2 5L5 2L8 5M2 9L5 6L8 9" fill="none" stroke="#215dc6" strokeWidth="1.3" />
              </svg>
            </div>
          </div>
          <div className="flex-1 flex flex-col bg-[#d6dff7] border border-white border-t-0 pt-[6px] pl-[6px]">
            {taskItems.map(([label, k]) => (
              <div key={label} className="h-[22px] flex items-center gap-[1px] text-[#215dc6]">
                <Icon k={k} className="w-[17px] h-[17px]" />
                <span>{label}</span>
              </div>
            ))}
          </div>
        </div>
      </div>
    </div>
  </div>
)

// ---- 3D view ----
const smooth = (pts: number[][]) => {
  let d = `M${pts[0][0]} ${pts[0][1]}`
  for (let i = 1; i < pts.length - 1; i++) {
    const mx = (pts[i][0] + pts[i + 1][0]) / 2
    const my = (pts[i][1] + pts[i + 1][1]) / 2
    d += `Q${pts[i][0]} ${pts[i][1]} ${mx} ${my}`
  }
  const last = pts[pts.length - 1]
  return `${d}L${last[0]} ${last[1]}`
}

const leftLoop = [
  [468, 809], [486, 773], [506, 729], [545, 691], [585, 650], [624, 633], [664, 617], [711, 616], [739, 622],
  [778, 650], [790, 691], [797, 740], [794, 795], [774, 839], [751, 869], [711, 880], [680, 893], [632, 895],
  [577, 901], [531, 892], [513, 872], [488, 839], [487, 803],
]
const rightLoop = [
  [2117, 753], [2127, 733], [2145, 700], [2154, 697], [2182, 692], [2209, 693], [2223, 710], [2239, 740], [2244, 767],
  [2250, 790], [2255, 815], [2250, 833], [2219, 845], [2191, 845], [2163, 852], [2136, 845], [2118, 833], [2104, 803],
  [2097, 777], [2108, 745],
]

const segments = [
  [861, 417, 1560, 648],
  [861, 417, 347, 929],
  [347, 929, 1239, 1224],
  [1239, 1224, 1560, 900],
  [272, 785, 2077, 1385],
  [1009, 467, 967, 510],
  [1306, 566, 1264, 607],
  [776, 503, 848, 527],
  [604, 674, 678, 698],
  [432, 843, 506, 868],
  [537, 936, 495, 978],
  [835, 1034, 793, 1076],
  [1132, 1132, 1089, 1175],
  [1249, 1115, 1324, 1139],
  [1421, 945, 1494, 968],
]

const lerp = (a: number[], b: number[], t: number) => [a[0] + (b[0] - a[0]) * t, a[1] + (b[1] - a[1]) * t]
const gridTL = [923, 552]
const gridTR = [1518, 748]
const gridBR = [1176, 1090]
const gridBL = [582, 893]

const Grid = () => {
  const lines: string[] = []
  for (let i = 0; i <= 46; i++) {
    const t = i / 46
    const a = lerp(gridTL, gridTR, t)
    const b = lerp(gridBL, gridBR, t)
    const c = lerp(gridTL, gridBL, t)
    const d = lerp(gridTR, gridBR, t)
    lines.push(`M${a[0]} ${a[1]}L${b[0]} ${b[1]}M${c[0]} ${c[1]}L${d[0]} ${d[1]}`)
  }
  // one more row bunches up towards the near edge
  const c = lerp(gridTL, gridBL, 0.99)
  const d = lerp(gridTR, gridBR, 0.99)
  lines.push(`M${c[0]} ${c[1]}L${d[0]} ${d[1]}`)
  return <path d={lines.join("")} fill="none" stroke="#2f2f68" strokeWidth="0.8" />
}

const NavCube = () => (
  <g transform="translate(2340 115)">
    <g fill="#8b8eac">
      <path d="M72 6L60 19H85Z" />
      <circle cx="140" cy="12" r="7" />
      <path d="M51 13L53 23Q35 26 27 35L30 39L16 44L20 29L22 31Q33 18 51 13Z" />
      <path d="M93 13L91 23Q110 26 118 35L114 39L128 44L124 30L122 31Q108 18 93 13Z" />
      <path d="M9 68L0 80L9 93Z" />
      <path d="M133 67L147 80L133 94Z" />
      <path d="M59 142H85L72 155Z" />
    </g>
    <path d="M63 40L106 49L112 58L90 123L78 126L31 112L30 65L33 57Z" fill="#c4c8da" stroke="#111" strokeWidth="0.8" strokeLinejoin="round" />
    <path d="M33 57L83 70L106 49M30 67L78 83L92 82L83 70M78 83V126M92 82L90 123M30 65V112" fill="none" stroke="#111" strokeWidth="1" />
    <text transform="matrix(.95 .18 -.2 1 62 51)" fontFamily="Liberation Sans" fontWeight="700" fontSize="8" fill="#111">TOP</text>
    <text transform="matrix(.95 .3 0 1.3 40 96)" fontFamily="Liberation Sans" fontWeight="700" fontSize="10" fill="#111">FRONT</text>
    <text transform="rotate(-68 95 109)" x="95" y="109" fontFamily="Liberation Sans" fontWeight="700" fontSize="7" fill="#111">RIGHT</text>
    <path d="M30 112L20 74" stroke="#1010e0" strokeWidth="1.6" />
    <path d="M30 112L68 131" stroke="#e01010" strokeWidth="1.6" />
    <path d="M30 112L37 105" stroke="#20d020" strokeWidth="1.6" />
    <path d="M37 105L54 88" stroke="#b0e8b0" strokeWidth="1.2" />
    <path d="M98 130L109 127L121 132V145L109 149L98 146Z" fill="#77799b" />
    <path d="M125 134H139L132 141Z" fill="#33335f" />
  </g>
)

const Scene = () => (
  <svg viewBox="272 112 2223 1271" className="absolute inset-0 w-full h-full">
    {segments.map((s, i) => (
      <line key={i} x1={s[0]} y1={s[1]} x2={s[2]} y2={s[3]} stroke="#2a2a46" strokeWidth="1" />
    ))}
    <text transform="matrix(.74 -.68 1.65 .62 584 870)" fontFamily="DejaVu Sans" fontSize="48" fill="#727282" opacity="0.85">20,00 mm</text>
    <text transform="matrix(.95 .33 -.72 .44 520 968)" fontFamily="DejaVu Sans" fontSize="68" fill="#727282" opacity="0.85">20,00 mm</text>
    <Grid />
    <path d="M752 722L1345 918M1219 651L881 991" stroke="#c4c4d0" strokeWidth="1" opacity="0.7" />
    <circle cx="909" cy="1105" r="1.6" fill="#ee1c1c" />
    <path d={smooth(leftLoop)} fill="none" stroke="#ee1c1c" strokeWidth="3" strokeLinecap="round" />
    <NavCube />
    {/* axis cross */}
    <path d="M2431 1319V1290" stroke="#1f1f8c" strokeWidth="2" />
    <path d="M2431 1277L2426 1295H2436Z" fill="#1f1f8c" />
    <path d="M2431 1319L2443 1307" stroke="#1f8a2c" strokeWidth="2" />
    <path d="M2450 1301L2437 1305L2445 1313Z" fill="#1f8a2c" />
    <path d="M2431 1319L2458 1328" stroke="#8a2020" strokeWidth="2" />
    <path d="M2474 1333L2457 1323L2455 1333Z" fill="#8a2020" />
    <g fontFamily="Liberation Sans" fontSize="11" fill="#111">
      <text x="2432" y="1277">Z</text>
      <text x="2450" y="1301">Y</text>
      <text x="2474" y="1334">X</text>
    </g>
  </svg>
)

// ---- preferences dialog ----
const Check = ({ label, on = true }: { label: string; on?: boolean }) => (
  <div className="h-[23px] flex items-center gap-[5px]">
    <div className="w-[13px] h-[13px] flex items-center justify-center bg-white border border-[#333]">
      {on && (
        <svg viewBox="0 0 11 11" className="w-[11px] h-[11px]">
          <path d="M2 5.5L4.5 8.5L9.5 1.5" fill="none" stroke="#333" strokeWidth="1" />
        </svg>
      )}
    </div>
    <span>{label}</span>
  </div>
)

const Combo = ({ value }: { value: string }) => (
  <div className="w-[48px] h-[20px] flex items-center justify-between bg-[#e1e1e1] border border-[#adadad] pl-[2px] pr-[4px]">
    <span>{value}</span>
    <svg viewBox="0 0 10 6" className="w-[9px] h-[6px]">
      <path d="M1 1L5 5L9 1" fill="none" stroke="#555" />
    </svg>
  </div>
)

const Spin = ({ value, className, left = false }: { value: string; className: string; left?: boolean }) => (
  <div className={`h-[20px] flex items-center bg-white border border-[#7a7a7a] ${className}`}>
    <span className={`flex-1 ${left ? "pl-[4px]" : "text-right pr-[3px]"}`}>{value}</span>
    <div className="w-[14px] h-[18px] flex flex-col gap-px mr-[1px]">
      <div className="flex-1 flex items-center justify-center bg-[#e6e6e6] border border-[#c4c4c4]">
        <div className="w-0 h-0 border-x-[2.5px] border-x-transparent border-b-[3px] border-b-[#111]" />
      </div>
      <div className="flex-1 flex items-center justify-center bg-[#e6e6e6] border border-[#c4c4c4]">
        <div className="w-0 h-0 border-x-[2.5px] border-x-transparent border-t-[3px] border-t-[#111]" />
      </div>
    </div>
  </div>
)

const Row = ({ label, className = "h-[26px]", children }: { label: string; className?: string; children: React.ReactNode }) => (
  <div className={`flex items-center justify-between ${className}`}>
    <span>{label}</span>
    <div className="flex items-center gap-[7px]">{children}</div>
  </div>
)

const Group = ({ title, className, children }: { title: string; className: string; children: React.ReactNode }) => (
  <div className={`relative border border-[#dcdcdc] pl-[8px] pr-[8px] text-[11.5px] tracking-[-0.35px] ${className}`}>
    <span className="absolute left-[6px] -top-[7px] bg-white px-[1px]">{title}</span>
    {children}
  </div>
)

const PrefIcons: Record<string, React.ReactNode> = {
  General: (
    <>
      <path d="M6 36L30 4" stroke="#c8c8c8" strokeWidth="4" />
      <path d="M3 38C1 32 8 24 14 21L18 25C16 31 10 38 7 39Z" fill="#2f6fb0" stroke="#173a60" />
      <path d="M34 36L12 10" stroke="#bcbcbc" strokeWidth="5" />
      <path d="M6 2L14 6L15 12L9 14L3 10L9 9Z" fill="#c8c8c8" stroke="#777" />
      <path d="M30 2L37 1L36 8L31 10Z" fill="#d4d4d4" stroke="#888" />
      <ellipse cx="20" cy="38" rx="16" ry="2" fill="#0000001f" />
    </>
  ),
  Display: (
    <>
      <rect x="1" y="1" width="38" height="28" rx="2" fill="#d0d0d0" stroke="#888" />
      <path d="M4 4H34V24H4Z" fill="#2f2f78" />
      <path d="M4 24V14C16 14 28 8 34 4V24Z" fill="#55558f" />
      <path d="M15 29H25V33H15Z" fill="#aaa" />
      <ellipse cx="20" cy="35" rx="11" ry="4" fill="#c8c8c8" stroke="#777" />
    </>
  ),
  Workbenches: (
    <>
      <path d="M3 0H30L37 8V40H3Z" fill="#fafafa" stroke="#bbb" />
      <path d="M29 40L37 32H29Z" fill="#bdbdbd" />
      <path d="M9 12L20 9L32 12V26L20 30L9 26Z" fill="#c67a20" stroke="#6a3e08" />
      <path d="M9 12L20 15L32 12M20 15V30" fill="none" stroke="#6a3e08" />
      <path d="M11 16H18V27H11Z" fill="#d2161c" />
      <circle cx="17" cy="24" r="3" fill="#3a6cb0" />
    </>
  ),
  "Addon Manager": (
    <>
      <path d="M2 10L22 0L40 8V30L20 40L2 32Z" fill="#d08a24" stroke="#4a2c06" strokeWidth="1.4" />
      <path d="M2 10L20 18L40 8M20 18V40" fill="none" stroke="#4a2c06" strokeWidth="1.4" />
      <path d="M11 5L30 13" stroke="#4a2c06" strokeWidth="1.4" />
      <path d="M5 15H15V21H10V24H14V28H10V34H5Z" fill="#d2161c" stroke="#6b0b10" />
      <circle cx="15" cy="29" r="5" fill="#3a6cb0" stroke="#16365f" />
      <circle cx="15" cy="29" r="1.8" fill="#e8eef7" />
    </>
  ),
  "Import-Export": (
    <>
      <path d="M3 4H32L38 10V40H3Z" fill="#f4f4f4" stroke="#bbb" />
      <path d="M8 8C14 1 24 1 30 8L33 5V14H24L27 11C23 7 15 7 11 11Z" fill="#68a8e0" stroke="#3a6ca0" />
      <path d="M14 12H27V17H20V21H25V26H20V34H14Z" fill="#d2161c" stroke="#6b0b10" />
      <circle cx="28" cy="28" r="6" fill="#3a6cb0" stroke="#16365f" />
      <circle cx="28" cy="28" r="2" fill="#e8eef7" />
      <path d="M7 30C12 38 22 38 28 35L31 38H22V33" fill="#68a8e0" stroke="#3a6ca0" />
    </>
  ),
  Start: <path d="M2 12H20V1L39 20L20 39V28H2Z" fill="#2f6fb0" stroke="#0a1c30" strokeWidth="1.2" strokeLinejoin="round" />,
  Draft: (
    <>
      <path d="M7 2H38V40H7Z" fill="#97c6e6" stroke="#1b3c66" strokeWidth="1.2" />
      <path d="M16 3L33 33H16Z" fill="#b8c874" stroke="#333" />
      <path d="M20 20L25 29H20Z" fill="#97c6e6" stroke="#333" />
      <path d="M1 24H6V27L36 25L34 32L6 34V38H1Z" fill="#b4a88a" stroke="#555" />
    </>
  ),
  "Part design": (
    <>
      <rect x="1" y="1" width="38" height="30" rx="2" fill="#d0d0d0" stroke="#888" />
      <path d="M4 4H36V27H4Z" fill="#25257a" />
      <path d="M6 11L27 4L30 8L22 24L18 22L14 16Z" fill="#5fd020" stroke="#1e5a08" />
      <path d="M33 10V25H24Z" fill="#e3c21c" stroke="#6b5a08" />
      <path d="M15 31H25V34H15Z" fill="#aaa" />
      <ellipse cx="20" cy="36" rx="11" ry="3.5" fill="#c8c8c8" stroke="#777" />
    </>
  ),
  Sketcher: (
    <>
      <rect x="2" y="15" width="26" height="25" fill="none" stroke="#8a0808" strokeWidth="3.4" />
      <rect x="2" y="15" width="26" height="25" fill="none" stroke="#e02020" strokeWidth="1.6" />
      <circle cx="26" cy="13" r="11" fill="none" stroke="#8a0808" strokeWidth="3.4" />
      <circle cx="26" cy="13" r="11" fill="none" stroke="#e02020" strokeWidth="1.6" />
    </>
  ),
}

const prefPages = ["General", "Display", "Workbenches", "Addon Manager", "Import-Export", "Start", "Draft", "Part design", "Sketcher"]

const prefTabs = [
  ["General settings", "w-[99px]"],
  ["User interface settings", "w-[133px]"],
  ["Grid and snapping", "w-[113px]"],
  ["Visual settings", "w-[90px]"],
  ["Texts and dimensions", "w-[124px]"],
]

const DlgButton = ({ label, className = "border-[#adadad]" }: { label: string; className?: string }) => (
  <div className={`w-[73px] h-[21px] flex items-center justify-center bg-[#e1e1e1] border ${className}`}>{label}</div>
)

const Preferences = () => (
  <div className="absolute left-[1269px] top-[212px] w-[709px] h-[807px] flex flex-col bg-[#f0f0f0] shadow-[0_1px_5px_rgba(0,0,0,0.55)]">
    <div className="h-[30px] flex items-center bg-white pl-[9px] pr-[18px]">
      <Svg className="w-[17px] h-[17px]">
        <Logo />
      </Svg>
      <span className="ml-[5px] flex-1">Preferences</span>
      <span className="text-[#333] text-[13px]">?</span>
      <svg viewBox="0 0 12 12" className="ml-[38px] w-[12px] h-[12px]">
        <path d="M1 1L11 11M11 1L1 11" stroke="#222" />
      </svg>
    </div>
    <div className="h-[729px] mt-[9px] flex pl-[10px] pr-[11px] gap-[7px]">
      <div className="w-[108px] shrink-0 flex flex-col items-center bg-white border border-[#828790] pt-[4px] pl-[3px]">
        {prefPages.map((p) => (
          <div key={p} className="relative h-[75px] flex flex-col items-center">
            {p === "Draft" && <div className="absolute left-[-3px] top-[2px] h-[68px] w-[52px] bg-[#cce8ff]" />}
            <svg viewBox="0 0 40 40" className="relative w-[44px] h-[44px] mt-[3px] shrink-0">
              {PrefIcons[p]}
            </svg>
            <span className="relative mt-[3px]">{p}</span>
          </div>
        ))}
      </div>
      <div className="flex-1 flex flex-col">
        <div className="h-[20px] flex items-end pl-[1px]">
          {prefTabs.map(([t, w]) => (
            <div
              key={t}
              className={`${w} flex items-center justify-center border border-[#dcdcdc] border-b-0 ${
                t === "Grid and snapping" ? "h-[20px] bg-white" : "h-[18px] bg-[#f0f0f0]"
              }`}
            >
              {t}
            </div>
          ))}
        </div>
        <div className="flex-1 bg-white border border-[#dcdcdc] pt-[25px] px-[19px] flex flex-col gap-[13px]">
          <Group title="Snapping" className="h-[167px] pt-[14px]">
            <Check label="Always snap (disable snap mod)" />
            <Row label="Constrain mod">
              <Combo value="Shift" />
            </Row>
            <Row label="Snap mod">
              <Combo value="Ctrl" />
            </Row>
            <Row label="Alt mod">
              <Combo value="Alt" />
            </Row>
            <Check label="Show Draft Snap toolbar" />
            <Check label="Hide Draft snap toolbar after use" on={false} />
          </Group>
          <Group title="Grid" className="h-[242px] pt-[14px]">
            <Check label="Use grid" />
            <Check label="Always show the grid" />
            <Check label="Show grid border" />
            <Check label="Show human figure" />
            <Check label="Use colored axes" />
            <Row label="Main lines every">
              <Spin value="20" className="w-[33px]" />
            </Row>
            <Row label="Grid spacing">
              <Spin value="100,00" className="w-[76px]" left />
            </Row>
            <Row label="Grid size">
              <Spin value="50 lines" className="w-[69px]" />
            </Row>
            <Row label="Grid color and transparency" className="h-[31px]">
              <div className="w-[42px] h-[22px] flex items-center justify-center bg-[#e1e1e1] border border-[#adadad]">
                <div className="w-[28px] h-[12px] bg-[#333355] border border-[#888]" />
              </div>
              <Spin value="20" className="w-[39px]" left />
            </Row>
          </Group>
          <Group title="Edit" className="h-[71px] pt-[14px]">
            <Row label="Maximum number of contemporary edited objects">
              <Spin value="5" className="w-[33px]" />
            </Row>
            <Row label="Draft edit pick radius">
              <Spin value="20" className="w-[33px]" />
            </Row>
          </Group>
        </div>
      </div>
    </div>
    <div className="mt-[8px] flex items-center pl-[11px] pr-[11px] gap-[8px]">
      <DlgButton label="Reset" />
      <div className="flex-1" />
      <DlgButton label="OK" className="border-2 border-[#0078d7]" />
      <DlgButton label="Cancel" />
      <DlgButton label="Apply" />
      <DlgButton label="Help" />
    </div>
  </div>
)

// ---- status bar ----
const StatusBar = () => (
  <div className="h-[35px] flex items-center justify-end bg-[#f0f0f0] pr-[10px]">
    <div className="w-px h-[28px] bg-[#d8d8d8]" />
    <svg viewBox="0 0 16 16" className="ml-[13px] w-[15px] h-[15px]">
      <path d="M2 2H14V14H2ZM2 6H14M2 10H14M6 2V14M10 2V14" fill="none" stroke="#999" strokeWidth="1.2" strokeDasharray="1.5 1" />
    </svg>
    <div className="ml-[7px] w-[38px] h-[22px] flex items-center justify-center gap-[1px] bg-[#cce4f7] border border-[#005499]">
      <Icon k="lock" className="w-[14px] h-[16px]" />
      <div className="w-0 h-0 border-x-[4px] border-x-transparent border-t-[4px] border-t-[#111]" />
    </div>
    <svg viewBox="0 0 16 16" className="ml-[7px] w-[16px] h-[16px]">
      <path d="M2 15V9H7V15M2 11H7M9 8H15M11 2V8M14 2V8M9 3H15M9 5.5H15" fill="none" stroke="#2a7f84" strokeWidth="1.6" />
    </svg>
    <svg viewBox="0 0 16 16" className="ml-[12px] w-[13px] h-[13px]">
      <path d="M6 1H10V6H15V10H10V15H6V10H1V6H6Z" fill="#2fb4ba" />
    </svg>
    <div className="ml-[13px] w-[16px] h-[16px] bg-[#2fb4ba] border border-[#1a8c91] rounded-[1px]" />
    <div className="ml-[9px] w-px h-[28px] bg-[#d8d8d8]" />
    <svg viewBox="0 0 12 16" className="ml-[17px] w-[11px] h-[14px]">
      <rect x="1" y="1" width="10" height="14" rx="5" fill="none" stroke="#333" strokeWidth="1.4" />
      <path d="M6 3V7" stroke="#333" strokeWidth="1.6" />
    </svg>
    <span className="ml-[4px] tracking-normal">Blender</span>
    <div className="ml-[5px] w-0 h-0 border-x-[4px] border-x-transparent border-t-[4px] border-t-[#111]" />
    <div className="ml-[3px] w-px h-[26px] bg-[#d8d8d8]" />
    <span className="ml-[5px] text-[11.5px] tracking-[-0.45px]">129,57 mm x 74,08 mm</span>
  </div>
)

const DocTabs = () => (
  <div className="h-[22px] flex items-start bg-[#f0f0f0] pl-[2px] text-[11.5px] tracking-[-0.5px]">
    <div className="w-[141px] h-[22px] flex items-center bg-[#f0f0f0] border border-[#dcdcdc] border-t-0 pl-[9px] gap-[4px]">
      <Svg className="w-[17px] h-[17px]">
        <Logo />
      </Svg>
      <span>Başlangıç sayfası</span>
      <div className="w-[14px] h-[14px] flex items-center justify-center bg-[#b4b4b4] border border-[#999] rounded-[2px]">
        <svg viewBox="0 0 10 10" className="w-[8px] h-[8px]">
          <path d="M1 1L9 9M9 1L1 9" stroke="#fff" strokeWidth="2" />
        </svg>
      </div>
    </div>
    <div className="w-[126px] h-[24px] z-10 flex items-center bg-white border border-[#dcdcdc] border-t-0 pl-[13px] gap-[4px]">
      <Svg className="w-[17px] h-[17px]">
        <Logo />
      </Svg>
      <span>Unnamed : 1</span>
      <div className="w-[14px] h-[14px] flex items-center justify-center bg-[#e2563f] border border-[#b03020] rounded-[2px]">
        <svg viewBox="0 0 10 10" className="w-[8px] h-[8px]">
          <path d="M1 1L9 9M9 1L1 9" stroke="#fff" strokeWidth="2" />
        </svg>
      </div>
    </div>
  </div>
)

// ---- windows taskbar on the right ----
const Running = () => <div className="absolute right-0 top-[4px] bottom-[4px] w-[2px] bg-[#76b9ed]" />

const apps: { key: string; h: string; run?: boolean; active?: boolean; node: React.ReactNode }[] = [
  { key: "win", h: "h-[39px]", node: <path d="M3 5.5L11 4.3V11.4H3ZM12 4.1L21 3V11.4H12ZM3 12.6H11V19.7L3 18.5ZM12 12.6H21V21L12 19.9Z" fill="#fff" /> },
  {
    key: "search",
    h: "h-[40px]",
    node: (
      <>
        <circle cx="14" cy="9" r="6" fill="none" stroke="#fff" strokeWidth="1.3" />
        <path d="M9.5 13.5L3.5 20.5" stroke="#fff" strokeWidth="1.3" />
      </>
    ),
  },
  { key: "cortana", h: "h-[40px]", node: <circle cx="12" cy="12" r="8.5" fill="none" stroke="#fff" strokeWidth="2.2" /> },
  {
    key: "tasks",
    h: "h-[44px]",
    node: (
      <path d="M3 4H15M3 20H15M5 8H13V16H5ZM18 4H21M18 12H21V9.5H18M18 20H21" fill="none" stroke="#fff" strokeWidth="1.3" />
    ),
  },
  {
    key: "edge",
    h: "h-[46.7px]",
    node: (
      <>
        <circle cx="12" cy="12" r="11" fill="#1477c8" />
        <path d="M2 10C4 1 17 -1 22 8C24 14 19 16 15 15C17 13 16 9 12 9C8 9 5 12 5 16C2 15 1 13 2 10Z" fill="#35c1a5" />
        <path d="M8 18C6 12 11 9 14 11C11 11 10 14 12 17C15 20 20 18 22 15C20 21 12 24 8 18Z" fill="#0c4f94" />
      </>
    ),
  },
  {
    key: "folder",
    h: "h-[46.7px]",
    node: (
      <>
        <path d="M1 3H9L11 6H23V21H1Z" fill="#d9a526" />
        <path d="M1 7H23V21H1Z" fill="#f7cf58" />
        <path d="M7 15H17V21H14V18H10V21H7Z" fill="#2a76c4" />
      </>
    ),
  },
  {
    key: "store",
    h: "h-[46.7px]",
    node: (
      <>
        <path d="M7 6V3C7 1 17 1 17 3V6" fill="none" stroke="#1da1e8" strokeWidth="1.8" />
        <rect x="1" y="5" width="22" height="18" rx="2" fill="#f4f4f4" />
        <path d="M8 9H11.5V12.5H8Z" fill="#e6492d" />
        <path d="M12.5 9H16V12.5H12.5Z" fill="#7cb51f" />
        <path d="M8 13.5H11.5V17H8Z" fill="#13a2e8" />
        <path d="M12.5 13.5H16V17H12.5Z" fill="#fdbb0a" />
      </>
    ),
  },
  {
    key: "mail",
    h: "h-[46.7px]",
    node: (
      <>
        <path d="M0 9L12 2L24 9V22H0Z" fill="#1170c4" />
        <path d="M0 9L12 16L24 9V22H0Z" fill="#27a3e8" />
        <path d="M3 7L12 13L21 7L12 3Z" fill="#fff" />
      </>
    ),
  },
  {
    key: "firefox",
    h: "h-[46.7px]",
    run: true,
    node: (
      <>
        <circle cx="12" cy="13" r="10" fill="#f9533a" />
        <path d="M14 2C21 6 24 13 20 18C18 8 10 8 8 11C5 9 9 3 14 2Z" fill="#ffa436" />
        <circle cx="12" cy="14" r="5.5" fill="#5b2a9e" />
        <path d="M2 12C1 7 4 6 5 5C5 8 9 10 12 9" fill="#ffbd4f" />
      </>
    ),
  },
  {
    key: "tor",
    h: "h-[46.7px]",
    run: true,
    node: (
      <>
        <circle cx="12" cy="12" r="11" fill="#a893ec" stroke="#d8ccf6" />
        <path d="M4 11C7 13 10 12 12 11C14 12 17 13 20 11C18 15 14 15 12.5 15V19H11.5V15C10 15 6 15 4 11Z" fill="#fff" />
      </>
    ),
  },
  {
    key: "crescent",
    h: "h-[46.7px]",
    run: true,
    node: <path d="M14 2C7 2 1 6 1 12C1 18 7 22 13 22C20 22 24 17 23 12C22 17 18 19 13 19C8 19 5 16 5 12C5 7 9 4 14 2Z" fill="#182f8a" stroke="#0c1a55" strokeWidth="1.4" />,
  },
  {
    key: "orange",
    h: "h-[46.7px]",
    run: true,
    node: (
      <>
        <path d="M4 1C0 7 2 17 10 21C15 23 21 22 23 19C15 18 8 10 4 1Z" fill="#f59a64" stroke="#fbc6a4" />
        <path d="M8 9L11 18M13 14L15 20" stroke="#fcd4ba" />
      </>
    ),
  },
  { key: "freecad", h: "h-[46.7px]", run: true, active: true, node: <Logo /> },
]

const Taskbar = () => (
  <div className="w-[65px] h-full shrink-0 flex flex-col bg-[#1b2742] text-white text-[12px] tracking-normal">
    {apps.map((a) => (
      <div key={a.key} className={`relative flex items-center justify-center ${a.h} ${a.active ? "bg-[#4b5a70]" : ""}`}>
        <Svg className={a.key === "win" || a.key === "search" ? "w-[20px] h-[20px]" : "w-[24px] h-[24px]"}>{a.node}</Svg>
        {a.run && <Running />}
      </div>
    ))}
    <div className="flex-1" />
    <svg viewBox="0 0 12 12" className="self-center mr-[24px] w-[12px] h-[14px]">
      <path d="M8 1L3 6L8 11" fill="none" stroke="#fff" strokeWidth="1.1" />
    </svg>
    <div className="mt-[8px] grid grid-cols-2 w-[44px] self-center gap-y-[6px] gap-x-[2px] place-items-center">
      <svg viewBox="0 0 16 16" className="w-[16px] h-[16px]">
        <rect x="2" y="4" width="9" height="8" rx="2" fill="none" stroke="#fff" />
        <path d="M11 7L15 5V11L11 9M3 1.5H10M3 14.5H10" fill="none" stroke="#fff" />
      </svg>
      <svg viewBox="0 0 16 16" className="w-[16px] h-[16px]">
        <path d="M5 2H15V11H5M9 11V14M6 14H13M1 1H5V6H1Z" fill="none" stroke="#fff" />
      </svg>
      <svg viewBox="0 0 16 16" className="w-[17px] h-[17px]">
        <path d="M3 1C0 6 2 12 7 14C11 16 15 14 16 12C10 11 6 7 3 1Z" fill="#f59a64" />
        <path d="M9 2L12 6L8 7Z" fill="#555" />
      </svg>
      <svg viewBox="0 0 16 16" className="w-[16px] h-[16px]">
        <path d="M1 6H4L8 2V14L4 10H1ZM10 5C12 7 12 9 10 11M12 3C15 6 15 10 12 13" fill="none" stroke="#fff" />
      </svg>
      <div className="w-[16px] h-[16px] bg-[#e4002b] flex items-start justify-start p-[2px]">
        <div className="w-[6px] h-[6px] border-t-2 border-r-2 border-white" />
      </div>
    </div>
    <div className="mt-[20px] flex flex-col items-center gap-[3px] leading-[14px]">
      <span>12:42</span>
      <span>9.02.2022</span>
    </div>
    <div className="mt-[12px] h-[32px] flex items-center justify-center bg-[#24344f]">
      <svg viewBox="0 0 16 16" className="w-[17px] h-[17px]">
        <path d="M1 2H15V12H10L8 14L6 12H1Z" fill="none" stroke="#fff" />
      </svg>
    </div>
    <div className="h-[8px] border-b border-[#55627a]" />
    <div className="h-[5px]" />
  </div>
)

export default function App() {
  return (
    <div className="relative w-[2560px] h-[1440px] flex overflow-hidden whitespace-nowrap bg-[#f0f0f0] text-black text-[12px] leading-none tracking-[-0.3px] [font-family:Roboto,sans-serif]">
      <div className="flex-1 min-w-0 flex flex-col">
        {/* window title and menu */}
        <div className="h-[24px] relative flex items-center bg-white pl-[3px] text-[#8a8a8a]">
          <Svg className="w-[19px] h-[19px]">
            <Logo />
          </Svg>
          <span className="ml-[1px]">FreeCAD 0.20</span>
          <div className="absolute left-[1160px] top-0 w-[48px] h-px bg-[#0078d7]" />
          <div className="absolute left-[1208px] top-0 w-[193px] h-px bg-[#e6e6e6]" />
          <div className="absolute right-[28px] top-[4px] flex items-center gap-[34px]">
            <div className="w-[10px] h-px bg-[#999]" />
            <svg viewBox="0 0 12 14" className="w-[10px] h-[14px]">
              <path d="M3 3V1H10V10H8M1 3H8V13H1Z" fill="none" stroke="#999" />
            </svg>
            <svg viewBox="0 0 12 14" className="w-[11px] h-[14px]">
              <path d="M1 1L11 13M11 1L1 13" stroke="#999" />
            </svg>
          </div>
        </div>
        <div className="h-[20px] flex items-center gap-[17.5px] bg-white pl-[8px]">
          {["File", "Edit", "View", "Tools", "Macro", "Drafting", "Annotation", "Modification", "Utilities", "Windows", "Help", "Accessories"].map((m) => (
            <span key={m}>{m}</span>
          ))}
        </div>
        <TopRow />
        <BottomRow />
        <div className="flex-1 min-h-0 flex">
          <ComboView />
          <div className="flex-1 min-w-0 flex flex-col">
            <div className="flex-1 relative bg-[linear-gradient(180deg,#333366,#9898a9)]">
              <Scene />
              <Preferences />
              <svg viewBox="272 112 2223 1271" className="absolute inset-0 w-full h-full pointer-events-none">
                <path d={smooth(rightLoop)} fill="none" stroke="#ee1c1c" strokeWidth="3" strokeLinecap="round" />
              </svg>
            </div>
            <DocTabs />
          </div>
        </div>
        <StatusBar />
      </div>
      <Taskbar />
    </div>
  )
}
